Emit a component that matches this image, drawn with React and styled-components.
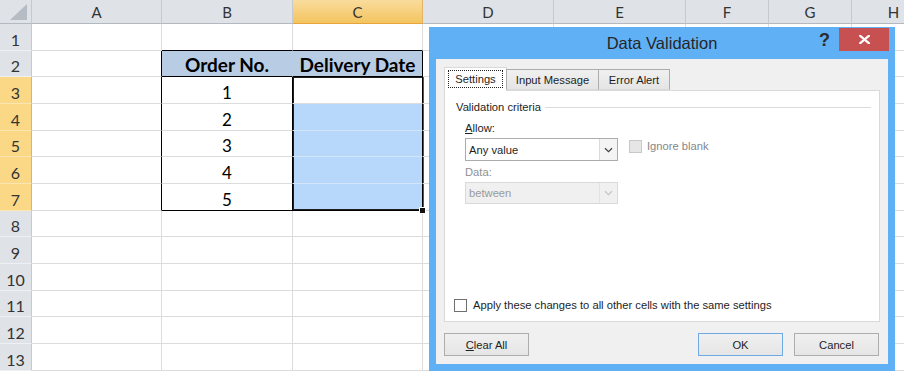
import React from 'react';
import styled, { createGlobalStyle } from 'styled-components';

const GlobalStyle = createGlobalStyle`
  html, body { margin: 0; padding: 0; background: #ffffff; }
  body { width: 904px; height: 378px; overflow: hidden; }
`;

const LETTERS = ['A', 'B', 'C', 'D', 'E', 'F', 'G', 'H'];
const COL_W = [130, 131, 130, 131, 132, 83, 83, 84];
const ROW_H = [27, 26, 27, 27, 26, 27, 27, 26, 27, 27, 26, 27, 27];
const GRID = '#dadcdd';
const INK = '#000000';
const HEAD_FILL = '#b8cce4';
const SEL_FILL = '#b7d8fb';
const SEL_EDGE = '#1e1e1e';

const DATA = {
  B2: 'Order No.',
  C2: 'Delivery Date',
  B3: '1',
  B4: '2',
  B5: '3',
  B6: '4',
  B7: '5',
};

function cellLook(col, row) {
  const tCol = col === 'B' || col === 'C';
  const inTable = tCol && row >= 2 && row <= 7;
  let fill = '#ffffff';
  let right = GRID;
  let bottom = GRID;
  let bold = false;
  const edges = [];
  if (inTable && row === 2) {
    fill = HEAD_FILL;
    bold = true;
  }
  if (col === 'C' && row >= 4 && row <= 7) fill = SEL_FILL;
  if (col === 'A' && row >= 2 && row <= 7) right = INK;
  if (col === 'B' && row === 2) right = HEAD_FILL;
  if (col === 'B' && row >= 3 && row <= 7) right = INK;
  if (col === 'C' && row >= 2 && row <= 7) right = INK;
  if (tCol && (row === 1 || row === 2 || row === 7)) bottom = INK;
  if (col === 'C' && row >= 4 && row <= 6) bottom = '#d3e5f8';
  if (col === 'C' && row >= 3 && row <= 7) {
    edges.push(`inset 1px 0 0 ${SEL_EDGE}`);
    if (row === 3) edges.push(`inset 0 1px 0 ${SEL_EDGE}`);
    if (row === 7) edges.push(`inset 0 -1px 0 ${SEL_EDGE}`);
  }
  if (col === 'D' && row >= 3 && row <= 7) edges.push('inset 1px 0 0 #555555');
  return {
    $fill: fill,
    $right: right,
    $bottom: bottom,
    $shadow: edges.length ? edges.join(', ') : 'none',
    $bold: bold,
  };
}

/* ---------- spreadsheet ---------- */

const Page = styled.div`
  position: relative;
  width: 904px;
  height: 378px;
  overflow: hidden;
  background: #ffffff;
`;

const Sheet = styled.div`
  display: grid;
  grid-template-columns: 32px ${(p) => p.$cols};
  grid-template-rows: 24px ${(p) => p.$rows};
  font-family: 'Lato', 'Carlito', 'Open Sans', sans-serif;
  color: #000;
`;

const Corner = styled.div`
  box-sizing: border-box;
  background: #dfe3e8;
  border-right: 1px solid #c5cad1;
  border-bottom: 1px solid #b3b9c1;
  display: flex;
`;

const ColHeader = styled.div`
  box-sizing: border-box;
  background: ${(p) => (p.$selected ? 'linear-gradient(#f9dc9c, #f3c460)' : '#dfe3e8')};
  border-right: 1px solid ${(p) => (p.$selected ? '#e2b462' : '#c5cad1')};
  border-bottom: 1px solid ${(p) => (p.$selected ? '#e6a43a' : '#b3b9c1')};
  display: flex;
  align-items: center;
  justify-content: center;
  padding-top: 1px;
  font-size: 15px;
  line-height: 18px;
  color: #333;
`;

const RowHeader = styled.div`
  box-sizing: border-box;
  background: ${(p) => (p.$selected ? '#fad886' : '#dfe3e8')};
  border-right: 1px solid ${(p) => (p.$selected ? '#e3b552' : '#c5cad1')};
  border-bottom: 1px solid ${(p) => (p.$selected ? '#fbe6b1' : '#eef0f3')};
  display: flex;
  align-items: flex-end;
  justify-content: center;
  padding-bottom: 1px;
  font-size: 16px;
  line-height: 19px;
  color: #333;
`;

const Cell = styled.div`
  position: relative;
  box-sizing: border-box;
  background: ${(p) => p.$fill};
  border-right: 1px solid ${(p) => p.$right};
  border-bottom: 1px solid ${(p) => p.$bottom};
  box-shadow: ${(p) => p.$shadow};
  display: flex;
  align-items: flex-end;
  justify-content: center;
  padding-bottom: ${(p) => (p.$bold ? '0' : '0')};
  font-size: ${(p) => (p.$bold ? 19 : 17)}px;
  font-weight: ${(p) => (p.$bold ? 700 : 400)};
  line-height: ${(p) => (p.$bold ? 22 : 20)}px;
  white-space: nowrap;
  z-index: ${(p) => (p.$top ? 2 : 'auto')};
`;

const FillHandle = styled.span`
  position: absolute;
  right: -3px;
  bottom: -3px;
  width: 5px;
  height: 5px;
  background: #111;
  outline: 1px solid #ffffff;
`;

/* ---------- dialog ---------- */

const Dialog = styled.div`
  position: absolute;
  left: 429px;
  top: 27px;
  width: 466px;
  height: 344px;
  background: #60b0f6;
  display: flex;
  flex-direction: column;
  font-family: 'Liberation Sans', Arial, sans-serif;
  font-size: 11.2px;
  color: #1e1e1e;
`;

const TitleBar = styled.div`
  height: 32px;
  flex: none;
  display: grid;
  grid-template-columns: 1fr auto 1fr;
  align-items: start;
`;

const Title = styled.div`
  grid-column: 2;
  font-size: 16.5px;
  line-height: 32px;
  color: #262626;
  white-space: nowrap;
`;

const Controls = styled.div`
  grid-column: 3;
  justify-self: end;
  display: flex;
  align-items: flex-start;
  margin-right: 6px;
`;

const Help = styled.span`
  margin-top: 4px;
  margin-right: 9px;
  font-size: 18px;
  font-weight: 700;
  line-height: 18px;
  color: #2b2b2b;
`;

const CloseButton = styled.div`
  margin-top: 1px;
  width: 50px;
  height: 23px;
  background: #c75050;
  display: flex;
  align-items: center;
  justify-content: center;
`;

const Client = styled.div`
  flex: 1;
  margin: 0 7px 7px;
  background: #f0f0f0;
  padding: 8px;
  box-sizing: border-box;
  display: flex;
  flex-direction: column;
`;

const TabStrip = styled.div`
  height: 23px;
  flex: none;
  display: flex;
  align-items: flex-end;
  position: relative;
  z-index: 1;
`;

const Tab = styled.div`
  box-sizing: border-box;
  width: ${(p) => p.$w}px;
  height: ${(p) => (p.$active ? 24 : 21)}px;
  margin-bottom: ${(p) => (p.$active ? -1 : 0)}px;
  margin-left: ${(p) => (p.$first ? 0 : -1)}px;
  border: 1px solid ${(p) => (p.$active ? '#d9d9d9' : '#acacac')};
  border-bottom: ${(p) => (p.$active ? 'none' : '1px solid #d9d9d9')};
  background: ${(p) => (p.$active ? '#ffffff' : 'linear-gradient(#f0f0f0, #e5e5e5)')};
  display: flex;
  align-items: ${(p) => (p.$active ? 'flex-start' : 'center')};
  justify-content: center;
  white-space: nowrap;
  line-height: 14px;
  padding-top: ${(p) => (p.$active ? 2 : 0)}px;
`;

const FocusRing = styled.span`
  box-sizing: border-box;
  height: 18px;
  padding: 1px 6px 0;
  border: 1px dotted #222;
  line-height: 15px;
`;

const Panel = styled.div`
  flex: 1;
  box-sizing: border-box;
  background: #ffffff;
  border: 1px solid #d9d9d9;
  padding: 9px 8px 9px 10px;
  display: flex;
  flex-direction: column;
`;

const GroupHeader = styled.div`
  display: flex;
  align-items: center;
  gap: 4px;
  height: 14px;
  line-height: 14px;
  padding-left: 1px;
  white-space: nowrap;
`;

const GroupRule = styled.div`
  flex: 1;
  height: 0;
  border-top: 1px solid #dcdcdc;
`;

const FieldLabel = styled.div`
  margin: ${(p) => p.$gap}px 0 0 10px;
  line-height: 14px;
  color: ${(p) => (p.$disabled ? '#8f8f8f' : '#1e1e1e')};
`;

const FieldRow = styled.div`
  display: flex;
  align-items: flex-start;
  margin: 3px 0 0 10px;
`;

const Select = styled.div`
  box-sizing: border-box;
  width: 153px;
  height: ${(p) => (p.$disabled ? 22 : 23)}px;
  border: 1px solid ${(p) => (p.$disabled ? '#d9d9d9' : '#acacac')};
  background: ${(p) => (p.$disabled ? '#f0f0f0' : '#ffffff')};
  color: ${(p) => (p.$disabled ? '#9a9a9a' : '#1e1e1e')};
  display: flex;
`;

const SelectValue = styled.div`
  flex: 1;
  padding-left: 3px;
  display: flex;
  align-items: center;
`;

const SelectButton = styled.div`
  width: 17px;
  border-left: 1px solid ${(p) => (p.$disabled ? '#e2e2e2' : '#dadada')};
  background: ${(p) => (p.$disabled ? '#f0f0f0' : '#f4f4f4')};
  display: flex;
  align-items: center;
  justify-content: center;
`;

const Check = styled.span`
  box-sizing: border-box;
  flex: none;
  width: 13px;
  height: 13px;
  border: 1px solid ${(p) => (p.$disabled ? '#c8c8c8' : '#707070')};
  background: ${(p) => (p.$disabled ? '#e6e6e6' : '#ffffff')};
`;

const CheckOption = styled.div`
  display: flex;
  align-items: center;
  gap: ${(p) => p.$gap}px;
  margin: ${(p) => p.$margin};
  line-height: 13px;
  white-space: nowrap;
  color: ${(p) => (p.$disabled ? '#868686' : '#1e1e1e')};
`;

const Spacer = styled.div`
  flex: 1;
`;

const ButtonRow = styled.div`
  flex: none;
  margin-top: 11px;
  display: flex;
  gap: 11px;
  padding-right: 1px;
`;

const Button = styled.div`
  box-sizing: border-box;
  width: 85px;
  height: 23px;
  border: 1px solid ${(p) => (p.$primary ? '#6fa9e3' : '#adadad')};
  background: linear-gradient(#f0f0f0, #e5e5e5);
  display: flex;
  align-items: center;
  justify-content: center;
  margin-right: ${(p) => (p.$pushLeft ? 'auto' : '0')};
`;

const Chevron = ({ color }) => (
  <svg width="9" height="6" viewBox="0 0 9 6">
    <path d="M1 1.2 L4.5 4.6 L8 1.2" fill="none" stroke={color} strokeWidth="1.2" />
  </svg>
);

const CornerMark = () => (
  <svg width="31" height="23" viewBox="0 0 31 23">
    <polygon points="10,20 27,20 27,4" fill="#b6bcc4" />
  </svg>
);

const CloseGlyph = () => (
  <svg width="11" height="9" viewBox="0 0 11 9">
    <path d="M1.2 0.8 L9.8 8.2 M9.8 0.8 L1.2 8.2" stroke="#ffffff" strokeWidth="2.2" strokeLinecap="square" />
  </svg>
);

const TABS = [
  { label: 'Settings', w: 63, active: true },
  { label: 'Input Message', w: 93 },
  { label: 'Error Alert', w: 72 },
];

export default function App() {
  const cells = [];
  cells.push(
    <Corner key="corner">
      <CornerMark />
    </Corner>
  );
  LETTERS.forEach((l) =>
    cells.push(
      <ColHeader key={`h${l}`} $selected={l === 'C'}>
        {l}
      </ColHeader>
    )
  );
  ROW_H.forEach((_, i) => {
    const row = i + 1;
    cells.push(
      <RowHeader key={`r${row}`} $selected={row >= 3 && row <= 7}>
        {row}
      </RowHeader>
    );
    LETTERS.forEach((col) => {
      const look = cellLook(col, row);
      const handle = col === 'C' && row === 7;
      cells.push(
        <Cell key={`${col}${row}`} {...look} $top={handle}>
          {DATA[`${col}${row}`]}
          {handle && <FillHandle />}
        </Cell>
      );
    });
  });

  return (
    <>
      <GlobalStyle />
      <Page>
        <Sheet
          $cols={COL_W.map((w) => `${w}px`).join(' ')}
          $rows={ROW_H.map((h) => `${h}px`).join(' ')}
        >
          {cells}
        </Sheet>

        <Dialog>
          <TitleBar>
            <Title>Data Validation</Title>
            <Controls>
              <Help>?</Help>
              <CloseButton>
                <CloseGlyph />
              </CloseButton>
            </Controls>
          </TitleBar>
          <Client>
            <TabStrip>
              {TABS.map((t, i) => (
                <Tab key={t.label} $w={t.w} $active={t.active} $first={i === 0}>
                  {t.active ? <FocusRing>{t.label}</FocusRing> : t.label}
                </Tab>
              ))}
            </TabStrip>
            <Panel>
              <GroupHeader>
                Validation criteria
                <GroupRule />
              </GroupHeader>
              <FieldLabel $gap={7}>
                <u>A</u>llow:
              </FieldLabel>
              <FieldRow>
                <Select>
                  <SelectValue>Any value</SelectValue>
                  <SelectButton>
                    <Chevron color="#404040" />
                  </SelectButton>
                </Select>
                <CheckOption $disabled $gap={5} $margin="2px 0 0 11px">
                  <Check $disabled />
                  Ignore blank
                </CheckOption>
              </FieldRow>
              <FieldLabel $gap={4} $disabled>
                Data:
              </FieldLabel>
              <FieldRow>
                <Select $disabled>
                  <SelectValue>between</SelectValue>
                  <SelectButton $disabled>
                    <Chevron color="#c4c4c4" />
                  </SelectButton>
                </Select>
              </FieldRow>
              <Spacer />
              <CheckOption $gap={6} $margin="0 0 0 -1px">
                <Check />
                Apply these changes to all other cells with the same settings
              </CheckOption>
            </Panel>
            <ButtonRow>
              <Button $pushLeft>
                <span>
                  <u>C</u>lear All
                </span>
              </Button>
              <Button $primary>OK</Button>
              <Button>Cancel</Button>
            </ButtonRow>
          </Client>
        </Dialog>
      </Page>
    </>
  );
}
